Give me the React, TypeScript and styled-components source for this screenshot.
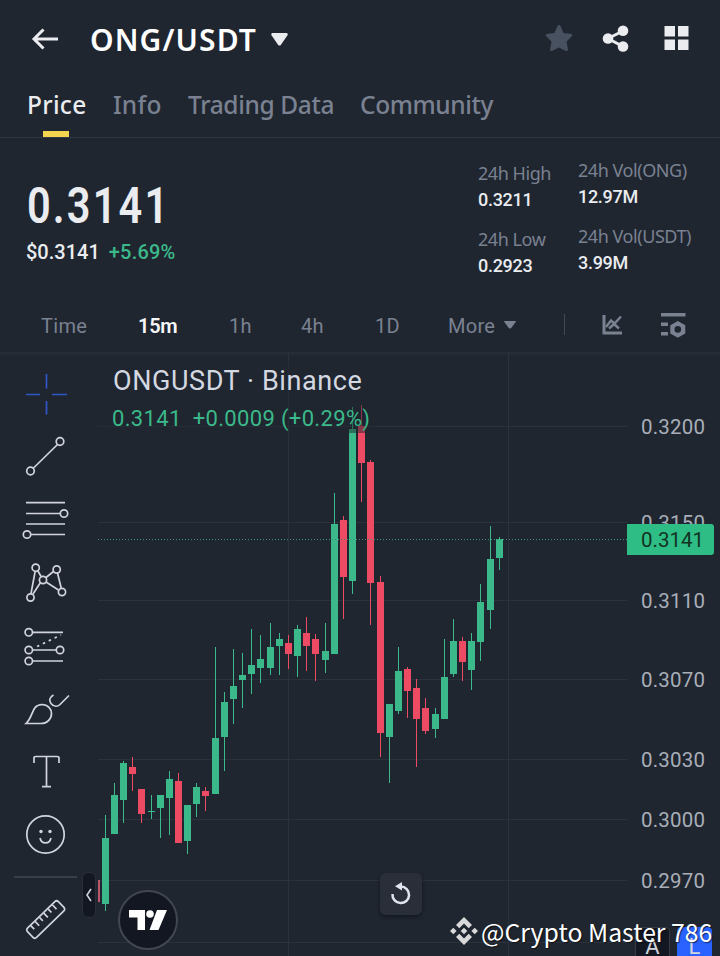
import React from "react";
import styled, { createGlobalStyle } from "styled-components";

const GlobalStyle = createGlobalStyle`
  * { box-sizing: border-box; }
  body { margin: 0; background: #1f2630; }
`;

const color = {
  bg: "#1f2630",
  text: "#eaecef",
  muted: "#7a8190",
  green: "#3bb98a",
  red: "#ed4b63",
  line: "#2b323c",
};

const Screen = styled.main`
  width: 720px;
  height: 956px;
  overflow: hidden;
  position: relative;
  display: flex;
  flex-direction: column;
  background: ${color.bg};
  color: ${color.text};
  font-family: "Noto Sans", "Open Sans", sans-serif;
  white-space: nowrap;
`;

const Header = styled.header`
  height: 78px;
  display: flex;
  align-items: center;
  padding: 0 28px 0 31px;
  flex: none;
`;

const Pair = styled.h1`
  margin: 1px 13px 0 32px;
  width: 168px;
  font-size: 30px;
  line-height: 40px;
  font-weight: 600;
  letter-spacing: 1.1px;
  color: #fff;
`;

const HeaderActions = styled.div`
  display: flex;
  align-items: center;
  gap: 29px;
  margin: -2px 0 0 auto;
`;

const Tabs = styled.nav`
  height: 60px;
  flex: none;
  display: grid;
  grid-template-columns: 86px 75px 172px auto;
  padding-left: 27px;
  border-bottom: 1px solid #303742;
`;

const Tab = styled.div<{ $active?: boolean; $spacing: number }>`
  display: flex;
  flex-direction: column;
  justify-content: space-between;
  padding-top: 10px;
  font-size: 24.5px;
  line-height: 34px;
  font-weight: 500;
  letter-spacing: ${(p) => p.$spacing}px;
  color: ${(p) => (p.$active ? color.text : color.muted)};
`;

const TabMarker = styled.i`
  width: 26px;
  height: 6px;
  margin-left: 16px;
  background: #f3d550;
`;

const Summary = styled.section`
  height: 160px;
  flex: none;
  display: flex;
  padding-left: 27px;
`;

const PriceBlock = styled.div`
  width: 451px;
  padding-top: 38px;
  font-family: Roboto, sans-serif;
`;

const BigPrice = styled.div`
  font-size: 50px;
  line-height: 60px;
  font-weight: 600;
  letter-spacing: 2.6px;
  transform: scaleX(0.83);
  transform-origin: left;
`;

const SubPrice = styled.div`
  display: flex;
  gap: 9px;
  margin: 4px 0 0 -1px;
  font-size: 20px;
  line-height: 24px;
  font-weight: 500;
`;

const Change = styled.span`
  color: ${color.green};
  letter-spacing: 0.2px;
`;

const StatColumn = styled.dl<{ $top: number; $width: number }>`
  margin: 0;
  width: ${(p) => p.$width}px;
  padding-top: ${(p) => p.$top}px;
`;

const StatLabel = styled.dt`
  font-size: 18px;
  line-height: 26px;
  letter-spacing: -0.45px;
  color: ${color.muted};
`;

const StatValue = styled.dd`
  margin: 0 0 14px;
  font-family: Roboto, sans-serif;
  font-size: 18px;
  line-height: 28px;
  height: 26px;
  font-weight: 500;
  letter-spacing: -0.3px;
`;

const Intervals = styled.nav`
  height: 54px;
  flex: none;
  display: grid;
  grid-template-columns: 97px 91px 72px 74px 73px 56px 60px 38px 59px auto;
  align-items: center;
  padding-left: 41px;
  padding-top: 1px;
  font-family: Roboto, sans-serif;
  font-size: 20px;
  color: ${color.muted};
`;

const Interval = styled.span<{ $active?: boolean }>`
  font-weight: ${(p) => (p.$active ? 600 : 400)};
  letter-spacing: ${(p) => (p.$active ? -0.3 : 0.3)}px;
  color: ${(p) => (p.$active ? "#f5f6f8" : color.muted)};
`;

const Divider = styled.i`
  width: 1px;
  height: 21px;
  margin-top: -3px;
  background: #414955;
`;

const ChartArea = styled.section`
  flex: 1;
  display: flex;
  position: relative;
  background: linear-gradient(#272e38, ${color.bg} 5px);
`;

const ToolRail = styled.aside`
  width: 97px;
  flex: none;
`;

const Plot = styled.svg`
  width: 623px;
  height: 604px;
  flex: none;
  display: block;
  font-family: Roboto, sans-serif;
`;

const Legend = styled.div`
  position: absolute;
  left: 98px;
  top: 9px;
  padding: 0 0 0 14px;
  height: 72px;
  width: 276px;
  background: rgba(31, 38, 48, 0.5);
  font-family: Roboto, sans-serif;
`;

const Symbol = styled.div`
  margin-left: 1px;
  font-size: 27px;
  line-height: 40px;
  color: #d4d8e0;
  letter-spacing: 0.58px;
`;

const Quote = styled.div`
  display: flex;
  gap: 11px;
  font-size: 22px;
  line-height: 36px;
  letter-spacing: 0.34px;
  color: ${color.green};
`;

const Collapse = styled.button`
  position: absolute;
  left: 82px;
  top: 520px;
  width: 14px;
  height: 46px;
  padding: 0 2px 0 0;
  border: 1px solid #292e39;
  border-radius: 6px;
  background: #131722;
  display: grid;
  place-items: center;
`;

const TvBadge = styled.div`
  position: absolute;
  left: 118px;
  top: 538px;
  width: 60px;
  height: 60px;
  border: 2px solid #434651;
  border-radius: 50%;
  background: #131722;
  display: grid;
  place-items: center;
`;

const ResetButton = styled.button`
  position: absolute;
  left: 380px;
  top: 521px;
  width: 42px;
  height: 42px;
  padding: 0;
  border: 0;
  border-radius: 6px;
  background: #2a2e39;
  box-shadow: 0 2px 4px rgba(0, 0, 0, 0.4);
  display: grid;
  place-items: center;
`;

const ScaleToggle = styled.div<{ $left: number; $on?: boolean }>`
  position: absolute;
  left: ${(p) => p.$left}px;
  top: 575px;
  width: 35px;
  height: 35px;
  border: 1px solid ${(p) => (p.$on ? "#2962ff" : "#363a45")};
  border-radius: 4px;
  background: ${(p) => (p.$on ? "#2962ff" : "#131722")};
  color: #d1d4dc;
  font: 22px/37px Roboto, sans-serif;
  text-align: center;
`;

const Watermark = styled.div`
  position: absolute;
  left: 450px;
  top: 913px;
  display: flex;
  align-items: center;
  gap: 3px;
  font: 400 24.8px/36px "Noto Sans CJK SC", sans-serif;
  color: #fff;
  text-shadow: 1px 1px 1px rgba(0, 0, 0, 0.6);
`;

type Candle = [number, number, number, number, number, 0 | 1];

/* x centre, wick top, body top, body bottom, wick bottom, rising */
const candles: Candle[] = [
  [105.5, 815, 838, 904, 911, 1],
  [114.5, 783, 795, 834, 834, 1],
  [123.5, 761, 763, 800, 823, 1],
  [132.5, 757, 767, 774, 791, 0],
  [141.5, 789, 789, 814, 823, 0],
  [151.5, 795, 811, 812, 819, 1],
  [160.5, 795, 795, 808, 838, 1],
  [169.5, 771, 779, 798, 835, 1],
  [178.5, 773, 781, 843, 843, 0],
  [187.5, 805, 805, 841, 854, 1],
  [196.5, 783, 787, 804, 817, 1],
  [205.5, 787, 791, 796, 811, 0],
  [215.5, 647, 738, 794, 794, 1],
  [224.5, 692, 702, 737, 771, 1],
  [233.5, 649, 686, 699, 724, 1],
  [242.5, 653, 675, 680, 708, 1],
  [251.5, 629, 665, 674, 694, 1],
  [260.5, 635, 659, 668, 683, 1],
  [270.5, 623, 647, 668, 675, 1],
  [279.5, 633, 639, 646, 675, 1],
  [288.5, 635, 643, 654, 669, 0],
  [297.5, 625, 629, 656, 677, 1],
  [306.5, 617, 633, 646, 671, 0],
  [315.5, 634, 639, 654, 681, 0],
  [325.5, 623, 651, 660, 673, 1],
  [334.5, 493, 524, 654, 654, 1],
  [343.5, 516, 520, 577, 619, 0],
  [352.5, 407, 429, 581, 594, 1],
  [361.5, 405, 426, 463, 502, 0],
  [370.5, 460, 462, 583, 625, 0],
  [380.5, 576, 582, 733, 757, 0],
  [389.5, 704, 704, 737, 783, 1],
  [398.5, 647, 671, 711, 714, 1],
  [407.5, 667, 669, 691, 718, 0],
  [416.5, 679, 688, 719, 767, 0],
  [425.5, 698, 708, 731, 734, 0],
  [435.5, 708, 714, 729, 738, 1],
  [444.5, 639, 677, 719, 719, 1],
  [453.5, 619, 641, 674, 677, 1],
  [462.5, 637, 641, 662, 681, 0],
  [471.5, 633, 641, 670, 690, 1],
  [480.5, 584, 602, 642, 661, 1],
  [490.5, 526, 559, 610, 629, 1],
  [499.5, 537, 539, 558, 570, 1],
];

const levels: [number, string][] = [
  [426, "0.3200"],
  [522, "0.3150"],
  [600, "0.3110"],
  [679, "0.3070"],
  [759, "0.3030"],
  [819, "0.3000"],
  [880, "0.2970"],
  [942, ""],
];

function PriceChart() {
  return (
    <Plot viewBox="97 352 623 604">
      <g stroke={color.line} strokeWidth="1">
        {levels.map(([y]) => (
          <path key={y} d={`M98 ${y + 0.5}H627`} />
        ))}
        <path d="M288.5 352V956M508.5 352V956" />
      </g>
      <rect x="98" y="880" width="2" height="22" fill="#b9586a" />
      {candles.map(([x, high, top, bottom, low, up]) => (
        <g key={x} fill={up ? color.green : color.red}>
          <rect x={x - 0.5} y={high} width="1" height={low - high} />
          <rect x={x - 3.5} y={top} width="7" height={bottom - top} />
        </g>
      ))}
      <path d="M98 539.5H627" stroke="#3b9377" strokeDasharray="1 2" />
      <g fill="#a9aeb8" fontSize="20.5">
        {levels.map(([y, label]) => (
          <text key={y} x="641" y={y + 7.5} textLength={label ? 64 : undefined}>
            {label}
          </text>
        ))}
      </g>
      <path d="M627 524H711a3 3 0 0 1 3 3V552a3 3 0 0 1-3 3H627z" fill="#2ebd85" />
      <text x="641" y="547" fontSize="20.5" textLength="63" fill="#123322">
        0.3141
      </text>
    </Plot>
  );
}

function DrawingTools() {
  return (
    <svg width="97" height="604" viewBox="0 352 97 604" fill="none" stroke="#d1d4dc" strokeWidth="1.7">
      <path d="M46.500 374V388.500M46.500 401V414.500M26 394.500H40M52 394.500H67" stroke="#2f57c8" />
      <path d="M33 468.500L57.500 444.500" />
      <circle cx="30.500" cy="471" r="3.800" />
      <circle cx="60" cy="441.500" r="3.800" />
      <path d="M26 502.700H65M26 513.500H60M26 524H65M31 534.500H65" />
      <circle cx="64" cy="513.500" r="3.700" />
      <circle cx="27" cy="534.500" r="3.700" />
      <path d="M35.200 571.200L31 593.500M37.700 570.500L41 576.500M33 594L40.500 582.500M46 577.500L53.500 571.500M57.500 573L61.200 588M46 582L58.500 590" />
      <circle cx="35.700" cy="567.700" r="3.600" />
      <circle cx="56.700" cy="569.500" r="3.600" />
      <circle cx="43" cy="580" r="3.600" />
      <circle cx="30.500" cy="597.500" r="3.600" />
      <circle cx="62" cy="592" r="3.600" />
      <path d="M33 632.300H63M33 650H56M33 661H63" />
      <path d="M37 646.500L61 635" strokeDasharray="2.500 4" />
      <circle cx="28.800" cy="632.300" r="3.700" />
      <circle cx="28.800" cy="650" r="3.700" />
      <circle cx="60" cy="650" r="3.700" />
      <circle cx="28.800" cy="661" r="3.700" />
      <path d="M26 723.500C34 716 31 705 42 704.500C48 704.500 51.500 709 51.500 713.500C51.500 719 47 723.500 41 723.500Z" />
      <path d="M53.500 695C49 697.500 49 700.500 51 703.500C54 707.500 58 706.500 60 704.500L69 695.500" />
      <path d="M34 763V758Q34 756.500 36 756.500H57Q59 756.500 59 758V763M46.500 757V786.500M42 786.700H51" />
      <circle cx="45.500" cy="834.500" r="18.700" />
      <path d="M40 838C41.500 844.500 49.500 844.500 51 838" />
      <g fill="#d1d4dc" stroke="none">
        <circle cx="41" cy="831.500" r="1.700" />
        <circle cx="50" cy="831.500" r="1.700" />
      </g>
      <path d="M14 877H77" stroke="#434852" />
      <g transform="translate(45.700 919.500) rotate(-44)">
        <rect x="-21.500" y="-6.500" width="43" height="13" rx="2.500" />
        <path d="M-15 -6V-1M-9 -6V0M-3 -6V-1M3 -6V0M9 -6V-1M15 -6V0" />
      </g>
    </svg>
  );
}

export default function App() {
  return (
    <Screen>
      <GlobalStyle />
      <Header>
        <svg width="27" height="22" viewBox="0 0 27 22" fill="none" stroke={color.text} strokeWidth="3">
          <path d="M27 11H3M12.500 1.500L3 11L12.500 20.500" />
        </svg>
        <Pair>ONG/USDT</Pair>
        <svg width="17" height="13" viewBox="0 0 17 13" fill={color.text}>
          <path d="M1 0H16Q17.500 1.500 16 3L9.800 12Q8.500 13 7.200 12L1 3Q-.5 1.500 1 0Z" />
        </svg>
        <HeaderActions>
          <svg width="28" height="28" viewBox="0 0 28 28" fill="#48515f">
            <path d="M14 1Q15 1 15.500 2L18.500 9L26.500 10Q28 10.500 27 12L21.500 17.500L23 25.500Q23 27.500 21 27L14 23.500L7 27Q5 27.500 5 25.500L6.500 17.500L1 12Q0 10.500 1.500 10L9.500 9L12.500 2Q13 1 14 1Z" />
          </svg>
          <svg width="27" height="27" viewBox="0 0 27 27" fill={color.text}>
            <path d="M21 6L6 13.500L21 21.500" fill="none" stroke={color.text} strokeWidth="3" />
            <circle cx="6" cy="13.500" r="5.300" />
            <circle cx="21" cy="5.700" r="5.300" />
            <circle cx="21" cy="21.500" r="5.300" />
          </svg>
          <svg width="34" height="25" viewBox="0 0 34 25" fill={color.text}>
            <path d="M6.500 0H17V10.500H6.500zM20 0H30.500V10.500H20zM6.500 13.500H17V24H6.500zM20 13.500H30.500V24H20z" />
          </svg>
        </HeaderActions>
      </Header>
      <Tabs>
        <Tab $active $spacing={0.3}>
          Price
          <TabMarker />
        </Tab>
        <Tab $spacing={0.2}>Info</Tab>
        <Tab $spacing={-0.37}>Trading Data</Tab>
        <Tab $spacing={-0.4}>Community</Tab>
      </Tabs>
      <Summary>
        <PriceBlock>
          <BigPrice>0.3141</BigPrice>
          <SubPrice>
            <span>$0.3141</span>
            <Change>+5.69%</Change>
          </SubPrice>
        </PriceBlock>
        <StatColumn $top={22} $width={100}>
          <StatLabel>24h High</StatLabel>
          <StatValue>0.3211</StatValue>
          <StatLabel>24h Low</StatLabel>
          <StatValue>0.2923</StatValue>
        </StatColumn>
        <StatColumn $top={19} $width={120}>
          <StatLabel>24h Vol(ONG)</StatLabel>
          <StatValue>12.97M</StatValue>
          <StatLabel>24h Vol(USDT)</StatLabel>
          <StatValue>3.99M</StatValue>
        </StatColumn>
      </Summary>
      <Intervals>
        <Interval>Time</Interval>
        <Interval $active>15m</Interval>
        <Interval>1h</Interval>
        <Interval>4h</Interval>
        <Interval>1D</Interval>
        <Interval>More</Interval>
        <svg width="12" height="9" viewBox="0 0 12 9" fill={color.muted}>
          <path d="M1 0H11Q12.500 1 11.500 2.300L7 8.200Q6 9 5 8.200L.5 2.300Q-.5 1 1 0Z" transform="translate(0 -1)" />
        </svg>
        <Divider />
        <svg width="21" height="22" viewBox="0 0 21 22" fill="none" stroke={color.muted} strokeWidth="3">
          <path d="M2 0V18H20" />
          <path d="M4 12L9 5.500L12.500 8.500L19 1.500M7 13.500L12 9L17 13.500" strokeWidth="2.500" />
        </svg>
        <svg width="26" height="28" viewBox="0 0 26 28" fill={color.muted}>
          <path d="M0 1H24.500V4.500H0zM0 10.500H7V14H0zM0 20H7V23.500H0z" />
          <path fillRule="evenodd" d="M16.800 9L24.300 13.200V21.600L16.800 25.800L9.300 21.600V13.200zM16.800 14.100a3.300 3.300 0 1 0 0 6.600a3.300 3.300 0 1 0 0-6.600z" />
        </svg>
      </Intervals>
      <ChartArea>
        <ToolRail>
          <DrawingTools />
        </ToolRail>
        <PriceChart />
        <Legend>
          <Symbol>ONGUSDT · Binance</Symbol>
          <Quote>
            <span>0.3141</span>
            <span>+0.0009 (+0.29%)</span>
          </Quote>
        </Legend>
        <Collapse>
          <svg width="7" height="14" viewBox="0 0 7 14" fill="none" stroke="#d1d4dc" strokeWidth="1.600">
            <path d="M6 1L2 7L6 13" />
          </svg>
        </Collapse>
        <TvBadge>
          <svg width="38" height="20" viewBox="0 0 38 20" fill="#fff">
            <path d="M0 0H16V20H8.500V7.500H0zM28 0H38L29.500 20H20.500z" />
            <circle cx="21" cy="4" r="3.800" />
          </svg>
        </TvBadge>
        <ResetButton>
          <svg width="22" height="24" viewBox="0 0 22 24" fill="none" stroke="#e0e3eb" strokeWidth="2.500">
            <path d="M2.500 12A8.300 8.300 0 1 0 10.800 4.500" />
            <path d="M12 0V8.500L5 4.200Z" fill="#e0e3eb" stroke="none" />
          </svg>
        </ResetButton>
        <ScaleToggle $left={635}>A</ScaleToggle>
        <ScaleToggle $left={677} $on>L</ScaleToggle>
      </ChartArea>
      <Watermark>
        <svg width="28" height="28" viewBox="0 0 28 28" fill="#d9d9d9">
          <path d="M14 0L22 8L18.700 11.300L14 6.600L9.300 11.300L6 8zM14 28L22 20L18.700 16.700L14 21.400L9.300 16.700L6 20zM0 14L3.300 10.700L6.600 14L3.300 17.300zM28 14L24.700 10.700L21.400 14L24.700 17.300zM14 10.700L17.300 14L14 17.300L10.700 14z" />
        </svg>
        <span>@Crypto Master 786</span>
      </Watermark>
    </Screen>
  );
}
